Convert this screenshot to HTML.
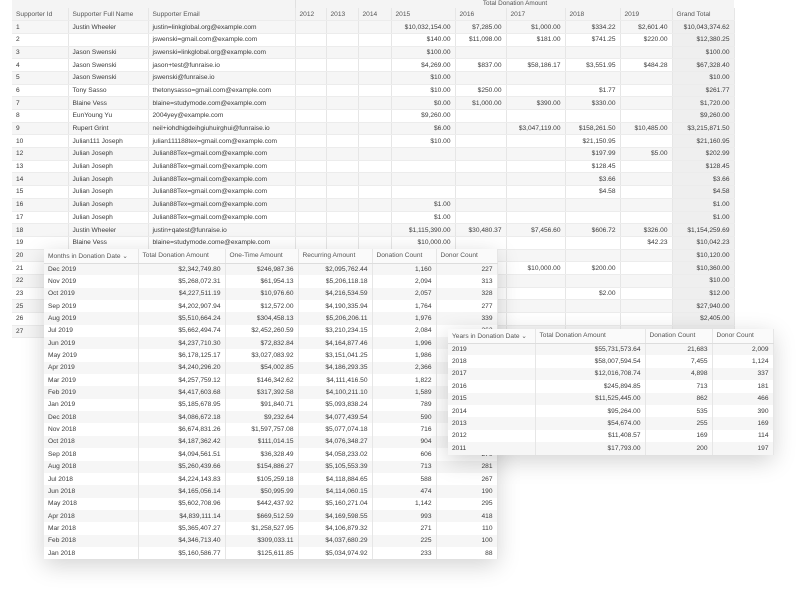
<!DOCTYPE html>
<html><head><meta charset="utf-8"><style>
*{margin:0;padding:0;box-sizing:border-box}
body{width:800px;height:613px;background:#fff;position:relative;overflow:hidden;font-family:"Liberation Sans",sans-serif;font-size:6.6px;color:#3a3a3a}
table{border-collapse:collapse;table-layout:fixed;position:absolute}
td,th{white-space:nowrap;overflow:hidden;padding:0 4px;font-weight:normal;text-align:left;border-right:1px solid #e6e6e6;border-bottom:1px solid #ececec}
td.r{text-align:right}
tr:nth-child(even) td{background:#f6f6f6}
#m td,#m th{height:12.7px}
#m th{background:#f4f4f4;color:#555}
#m td.g{background:#efefef}
.ov{position:absolute;background:#fff;box-shadow:0 6px 22px rgba(0,0,0,0.18)}
.ov table{position:static}
.ov th{background:#fafafa;height:14px;color:#555;border-bottom:1px solid #ddd}
#o1 td{height:12.35px;border-bottom:none}
#o2 td{height:12.4px;border-bottom:none}
</style></head><body>
<div style="position:absolute;left:12px;top:0;width:722px;height:8px;background:#f4f4f4"></div>
<div style="position:absolute;left:295px;top:0;width:439px;height:8px;text-align:center;font-size:6.4px;line-height:8px;color:#555;border-left:1px solid #e0e0e0">Total Donation Amount</div>
<table id="m" style="left:12px;top:8px;width:722px">
<colgroup><col style="width:56px"><col style="width:80px"><col style="width:147px"><col style="width:31px"><col style="width:32px"><col style="width:33px"><col style="width:64px"><col style="width:51px"><col style="width:59px"><col style="width:55px"><col style="width:52px"><col style="width:62px"></colgroup>
<tr><th>Supporter Id</th><th>Supporter Full Name</th><th>Supporter Email</th><th>2012</th><th>2013</th><th>2014</th><th>2015</th><th>2016</th><th>2017</th><th>2018</th><th>2019</th><th>Grand Total</th></tr>
<tr><td>1</td><td>Justin Wheeler</td><td>justin=linkglobal.org@example.com</td><td></td><td></td><td></td><td class="r">$10,032,154.00</td><td class="r">$7,285.00</td><td class="r">$1,000.00</td><td class="r">$334.22</td><td class="r">$2,601.40</td><td class="r g">$10,043,374.62</td></tr>
<tr><td>2</td><td></td><td>jswenski=gmail.com@example.com</td><td></td><td></td><td></td><td class="r">$140.00</td><td class="r">$11,098.00</td><td class="r">$181.00</td><td class="r">$741.25</td><td class="r">$220.00</td><td class="r g">$12,380.25</td></tr>
<tr><td>3</td><td>Jason Swenski</td><td>jswenski=linkglobal.org@example.com</td><td></td><td></td><td></td><td class="r">$100.00</td><td></td><td></td><td></td><td></td><td class="r g">$100.00</td></tr>
<tr><td>4</td><td>Jason Swenski</td><td>jason+test@funraise.io</td><td></td><td></td><td></td><td class="r">$4,269.00</td><td class="r">$837.00</td><td class="r">$58,186.17</td><td class="r">$3,551.95</td><td class="r">$484.28</td><td class="r g">$67,328.40</td></tr>
<tr><td>5</td><td>Jason Swenski</td><td>jswenski@funraise.io</td><td></td><td></td><td></td><td class="r">$10.00</td><td></td><td></td><td></td><td></td><td class="r g">$10.00</td></tr>
<tr><td>6</td><td>Tony Sasso</td><td>thetonysasso=gmail.com@example.com</td><td></td><td></td><td></td><td class="r">$10.00</td><td class="r">$250.00</td><td></td><td class="r">$1.77</td><td></td><td class="r g">$261.77</td></tr>
<tr><td>7</td><td>Blaine Vess</td><td>blaine=studymode.com@example.com</td><td></td><td></td><td></td><td class="r">$0.00</td><td class="r">$1,000.00</td><td class="r">$390.00</td><td class="r">$330.00</td><td></td><td class="r g">$1,720.00</td></tr>
<tr><td>8</td><td>EunYoung Yu</td><td>2004yey@example.com</td><td></td><td></td><td></td><td class="r">$9,260.00</td><td></td><td></td><td></td><td></td><td class="r g">$9,260.00</td></tr>
<tr><td>9</td><td>Rupert Grint</td><td>neil+iohdhigdeihgiuhuirghui@funraise.io</td><td></td><td></td><td></td><td class="r">$6.00</td><td></td><td class="r">$3,047,119.00</td><td class="r">$158,261.50</td><td class="r">$10,485.00</td><td class="r g">$3,215,871.50</td></tr>
<tr><td>10</td><td>Julian111 Joseph</td><td>julian111188tex=gmail.com@example.com</td><td></td><td></td><td></td><td class="r">$10.00</td><td></td><td></td><td class="r">$21,150.95</td><td></td><td class="r g">$21,160.95</td></tr>
<tr><td>12</td><td>Julian Joseph</td><td>Julian88Tex=gmail.com@example.com</td><td></td><td></td><td></td><td></td><td></td><td></td><td class="r">$197.99</td><td class="r">$5.00</td><td class="r g">$202.99</td></tr>
<tr><td>13</td><td>Julian Joseph</td><td>Julian88Tex=gmail.com@example.com</td><td></td><td></td><td></td><td></td><td></td><td></td><td class="r">$128.45</td><td></td><td class="r g">$128.45</td></tr>
<tr><td>14</td><td>Julian Joseph</td><td>Julian88Tex=gmail.com@example.com</td><td></td><td></td><td></td><td></td><td></td><td></td><td class="r">$3.66</td><td></td><td class="r g">$3.66</td></tr>
<tr><td>15</td><td>Julian Joseph</td><td>Julian88Tex=gmail.com@example.com</td><td></td><td></td><td></td><td></td><td></td><td></td><td class="r">$4.58</td><td></td><td class="r g">$4.58</td></tr>
<tr><td>16</td><td>Julian Joseph</td><td>Julian88Tex=gmail.com@example.com</td><td></td><td></td><td></td><td class="r">$1.00</td><td></td><td></td><td></td><td></td><td class="r g">$1.00</td></tr>
<tr><td>17</td><td>Julian Joseph</td><td>Julian88Tex=gmail.com@example.com</td><td></td><td></td><td></td><td class="r">$1.00</td><td></td><td></td><td></td><td></td><td class="r g">$1.00</td></tr>
<tr><td>18</td><td>Justin Wheeler</td><td>justin+qatest@funraise.io</td><td></td><td></td><td></td><td class="r">$1,115,390.00</td><td class="r">$30,480.37</td><td class="r">$7,456.60</td><td class="r">$606.72</td><td class="r">$326.00</td><td class="r g">$1,154,259.69</td></tr>
<tr><td>19</td><td>Blaine Vess</td><td>blaine=studymode.come@example.com</td><td></td><td></td><td></td><td class="r">$10,000.00</td><td></td><td></td><td></td><td class="r">$42.23</td><td class="r g">$10,042.23</td></tr>
<tr><td>20</td><td></td><td></td><td></td><td></td><td></td><td class="r">$10,000.00</td><td></td><td></td><td></td><td></td><td class="r g">$10,120.00</td></tr>
<tr><td>21</td><td></td><td></td><td></td><td></td><td></td><td class="r">$10,000.00</td><td></td><td class="r">$10,000.00</td><td class="r">$200.00</td><td></td><td class="r g">$10,360.00</td></tr>
<tr><td>22</td><td></td><td></td><td></td><td></td><td></td><td></td><td></td><td></td><td></td><td></td><td class="r g">$10.00</td></tr>
<tr><td>23</td><td></td><td></td><td></td><td></td><td></td><td></td><td></td><td></td><td class="r">$2.00</td><td></td><td class="r g">$12.00</td></tr>
<tr><td>25</td><td></td><td></td><td></td><td></td><td></td><td></td><td></td><td></td><td></td><td></td><td class="r g">$27,940.00</td></tr>
<tr><td>26</td><td></td><td></td><td></td><td></td><td></td><td></td><td></td><td></td><td></td><td></td><td class="r g">$2,405.00</td></tr>
<tr><td>27</td><td></td><td></td><td></td><td></td><td></td><td></td><td></td><td></td><td></td><td></td><td class="r g"></td></tr>
</table>

<div class="ov" id="o1" style="left:44px;top:249px;width:453px">
<table style="width:453px">
<colgroup><col style="width:94px"><col style="width:87px"><col style="width:73px"><col style="width:74px"><col style="width:64px"><col style="width:61px"></colgroup>
<tr><th>Months in Donation Date &#8964;</th><th>Total Donation Amount</th><th>One-Time Amount</th><th>Recurring Amount</th><th>Donation Count</th><th>Donor Count</th></tr>
<tr><td>Dec 2019</td><td class="r">$2,342,749.80</td><td class="r">$246,987.36</td><td class="r">$2,095,762.44</td><td class="r">1,160</td><td class="r">227</td></tr>
<tr><td>Nov 2019</td><td class="r">$5,268,072.31</td><td class="r">$61,954.13</td><td class="r">$5,206,118.18</td><td class="r">2,094</td><td class="r">313</td></tr>
<tr><td>Oct 2019</td><td class="r">$4,227,511.19</td><td class="r">$10,976.60</td><td class="r">$4,216,534.59</td><td class="r">2,057</td><td class="r">328</td></tr>
<tr><td>Sep 2019</td><td class="r">$4,202,907.94</td><td class="r">$12,572.00</td><td class="r">$4,190,335.94</td><td class="r">1,764</td><td class="r">277</td></tr>
<tr><td>Aug 2019</td><td class="r">$5,510,664.24</td><td class="r">$304,458.13</td><td class="r">$5,206,206.11</td><td class="r">1,976</td><td class="r">339</td></tr>
<tr><td>Jul 2019</td><td class="r">$5,662,494.74</td><td class="r">$2,452,260.59</td><td class="r">$3,210,234.15</td><td class="r">2,084</td><td class="r">262</td></tr>
<tr><td>Jun 2019</td><td class="r">$4,237,710.30</td><td class="r">$72,832.84</td><td class="r">$4,164,877.46</td><td class="r">1,996</td><td class="r">250</td></tr>
<tr><td>May 2019</td><td class="r">$6,178,125.17</td><td class="r">$3,027,083.92</td><td class="r">$3,151,041.25</td><td class="r">1,986</td><td class="r">260</td></tr>
<tr><td>Apr 2019</td><td class="r">$4,240,296.20</td><td class="r">$54,002.85</td><td class="r">$4,186,293.35</td><td class="r">2,366</td><td class="r">270</td></tr>
<tr><td>Mar 2019</td><td class="r">$4,257,759.12</td><td class="r">$146,342.62</td><td class="r">$4,111,416.50</td><td class="r">1,822</td><td class="r">280</td></tr>
<tr><td>Feb 2019</td><td class="r">$4,417,603.68</td><td class="r">$317,392.58</td><td class="r">$4,100,211.10</td><td class="r">1,589</td><td class="r">290</td></tr>
<tr><td>Jan 2019</td><td class="r">$5,185,678.95</td><td class="r">$91,840.71</td><td class="r">$5,093,838.24</td><td class="r">789</td><td class="r">300</td></tr>
<tr><td>Dec 2018</td><td class="r">$4,086,672.18</td><td class="r">$9,232.64</td><td class="r">$4,077,439.54</td><td class="r">590</td><td class="r">270</td></tr>
<tr><td>Nov 2018</td><td class="r">$6,674,831.26</td><td class="r">$1,597,757.08</td><td class="r">$5,077,074.18</td><td class="r">716</td><td class="r">280</td></tr>
<tr><td>Oct 2018</td><td class="r">$4,187,362.42</td><td class="r">$111,014.15</td><td class="r">$4,076,348.27</td><td class="r">904</td><td class="r">290</td></tr>
<tr><td>Sep 2018</td><td class="r">$4,094,561.51</td><td class="r">$36,328.49</td><td class="r">$4,058,233.02</td><td class="r">606</td><td class="r">270</td></tr>
<tr><td>Aug 2018</td><td class="r">$5,260,439.66</td><td class="r">$154,886.27</td><td class="r">$5,105,553.39</td><td class="r">713</td><td class="r">281</td></tr>
<tr><td>Jul 2018</td><td class="r">$4,224,143.83</td><td class="r">$105,259.18</td><td class="r">$4,118,884.65</td><td class="r">588</td><td class="r">267</td></tr>
<tr><td>Jun 2018</td><td class="r">$4,165,056.14</td><td class="r">$50,995.99</td><td class="r">$4,114,060.15</td><td class="r">474</td><td class="r">190</td></tr>
<tr><td>May 2018</td><td class="r">$5,602,708.96</td><td class="r">$442,437.92</td><td class="r">$5,160,271.04</td><td class="r">1,142</td><td class="r">295</td></tr>
<tr><td>Apr 2018</td><td class="r">$4,839,111.14</td><td class="r">$669,512.59</td><td class="r">$4,169,598.55</td><td class="r">993</td><td class="r">418</td></tr>
<tr><td>Mar 2018</td><td class="r">$5,365,407.27</td><td class="r">$1,258,527.95</td><td class="r">$4,106,879.32</td><td class="r">271</td><td class="r">110</td></tr>
<tr><td>Feb 2018</td><td class="r">$4,346,713.40</td><td class="r">$309,033.11</td><td class="r">$4,037,680.29</td><td class="r">225</td><td class="r">100</td></tr>
<tr><td>Jan 2018</td><td class="r">$5,160,586.77</td><td class="r">$125,611.85</td><td class="r">$5,034,974.92</td><td class="r">233</td><td class="r">88</td></tr>
</table></div>

<div class="ov" id="o2" style="left:448px;top:329px;width:325px">
<table style="width:325px">
<colgroup><col style="width:87px"><col style="width:110px"><col style="width:67px"><col style="width:61px"></colgroup>
<tr><th>Years in Donation Date &#8964;</th><th>Total Donation Amount</th><th>Donation Count</th><th>Donor Count</th></tr>
<tr><td>2019</td><td class="r">$55,731,573.64</td><td class="r">21,683</td><td class="r">2,009</td></tr>
<tr><td>2018</td><td class="r">$58,007,594.54</td><td class="r">7,455</td><td class="r">1,124</td></tr>
<tr><td>2017</td><td class="r">$12,016,708.74</td><td class="r">4,898</td><td class="r">337</td></tr>
<tr><td>2016</td><td class="r">$245,894.85</td><td class="r">713</td><td class="r">181</td></tr>
<tr><td>2015</td><td class="r">$11,525,445.00</td><td class="r">862</td><td class="r">466</td></tr>
<tr><td>2014</td><td class="r">$95,264.00</td><td class="r">535</td><td class="r">390</td></tr>
<tr><td>2013</td><td class="r">$54,674.00</td><td class="r">255</td><td class="r">169</td></tr>
<tr><td>2012</td><td class="r">$11,408.57</td><td class="r">169</td><td class="r">114</td></tr>
<tr><td>2011</td><td class="r">$17,793.00</td><td class="r">200</td><td class="r">197</td></tr>
</table></div>
</body></html>
